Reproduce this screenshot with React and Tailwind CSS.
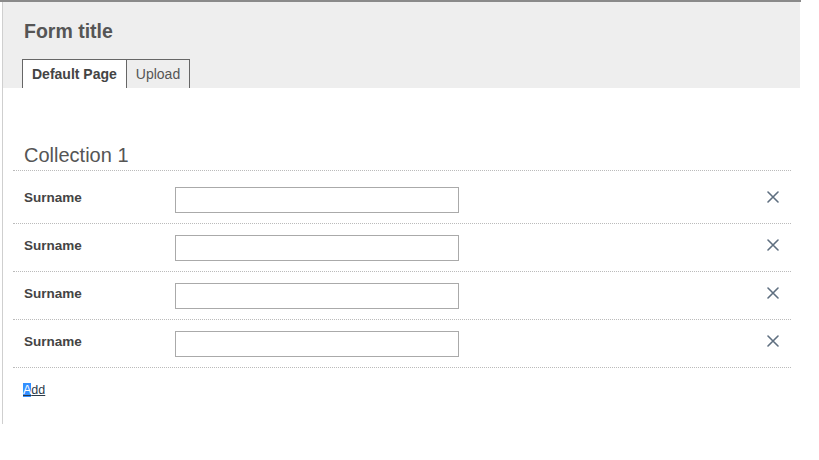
const rows = [0, 1, 2, 3];

function CloseIcon() {
    return (
        <svg width="12" height="12" viewBox="0 0 12 12" className="block">
            <path d="M1 1 L11 11 M11 1 L1 11" stroke="#5f6f80" strokeWidth="1.6" strokeLinecap="round" />
        </svg>
    );
}

export default function App() {
    return (
        <div className="min-h-screen bg-white font-['Liberation_Sans',Arial,sans-serif]">
            <div className="w-[801px] border-t-2 border-[#8a8a8a]">
                <div className="ml-[2px] w-[798px] border-l border-[#cfcfcf]">

                    {/* header */}
                    <div className="bg-[#eeeeee] h-[86px] pl-[21px] pt-[18px]">
                        <h1 className="text-[19.5px] leading-[22px] font-bold text-[#555]">
                            Form title
                        </h1>
                        <div className="flex mt-[17px] -ml-[2px]">
                            <div className="h-[29px] px-[9px] flex items-center bg-white border-t border-l border-r border-[#666] text-[14px] font-bold text-[#444]">
                                Default Page
                            </div>
                            <div className="h-[29px] px-[9px] flex items-center border-t border-r border-[#666] text-[14px] text-[#555]">
                                Upload
                            </div>
                        </div>
                    </div>

                    {/* collection */}
                    <div className="pl-[10px] pr-[9px] pt-[55px] pb-[26px]">
                        <h2 className="pl-[11px] text-[20px] leading-[24px] text-[#555] pb-[3px] border-b border-dotted border-[#bbb]">
                            Collection 1
                        </h2>

                        {rows.map((r) => (
                            <div
                                key={r}
                                className={
                                    "flex items-start border-b border-dotted border-[#bbb] pb-[10px] " +
                                    (r === 0 ? "pt-[16px]" : "pt-[11px]")
                                }
                            >
                                <div className="w-[162px] pl-[11px] pt-[3px] text-[13.5px] leading-[16px] font-bold text-[#444]">
                                    Surname
                                </div>
                                <input
                                    type="text"
                                    className="w-[284px] h-[26px] border border-[#aaa] bg-white outline-none"
                                />
                                <div className="flex-1" />
                                <button className="mt-[4px] mr-[12px] p-0">
                                    <CloseIcon />
                                </button>
                            </div>
                        ))}

                        <div className="mt-[14px] pl-[10px] text-[12.5px] leading-[16px]">
                            <a href="#" className="underline text-[#2b3a4a]">
                                <span className="bg-[#3390ff] text-white">A</span>dd
                            </a>
                        </div>
                    </div>
                </div>
            </div>
        </div>
    );
}
